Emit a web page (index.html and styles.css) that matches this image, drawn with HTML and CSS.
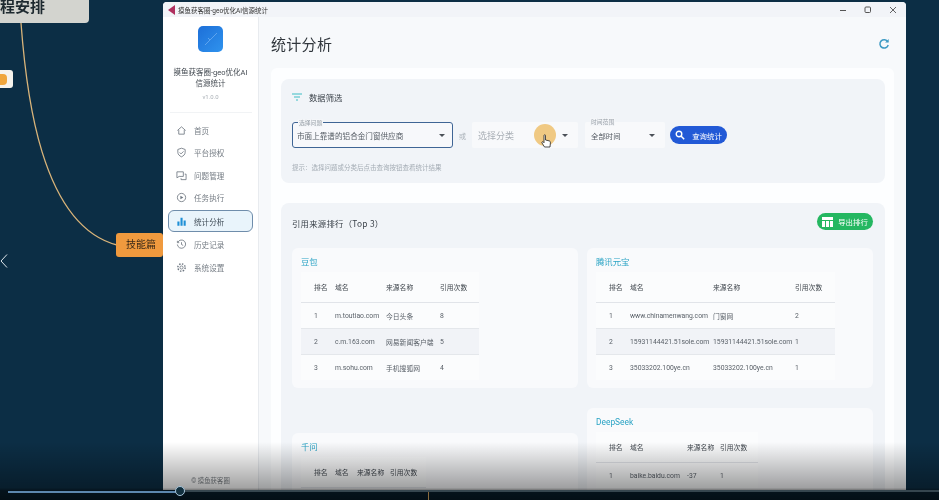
FILE: index.html
```html
<!DOCTYPE html>
<html lang="zh-CN">
<head>
    <meta charset="UTF-8">
    <title>统计分析</title>
    <link rel="stylesheet" href="styles.css">
</head>
<body>
    <!-- 视频背景：思维导图 -->
    <div class="desktop">
        <svg class="map-lines" width="170" height="260" viewBox="0 0 170 260">
            <path d="M21 23C26 90 40 225 117 245" fill="none" stroke="#d9b47a" stroke-width="1.3"/>
        </svg>
        <div class="map-top">程安排</div>
        <div class="map-chip"><span class="map-chip-dot"></span></div>
        <div class="map-node">技能篇</div>
        <svg class="map-back" width="8" height="16" viewBox="0 0 8 16">
            <path d="M7 1.5L1 8l6 6.5" fill="none" stroke="#dfe7ec" stroke-width="1"/>
        </svg>

        <div class="window">
            <div class="titlebar">
                <svg class="app-mark" width="8" height="10" viewBox="0 0 8 10"><path d="M7 0v10L0 5z" fill="#b0305f"/></svg>
                <span class="titlebar-text">摸鱼获客圈-geo优化AI信源统计</span>
                <div class="window-btns">
                    <svg width="8" height="8" viewBox="0 0 8 8"><path d="M1 4.5h6" stroke="#555" stroke-width="1"/></svg>
                    <svg width="8" height="8" viewBox="0 0 8 8"><rect x="1" y="1" width="5.5" height="5.5" rx="1" fill="none" stroke="#555" stroke-width="1"/></svg>
                    <svg width="8" height="8" viewBox="0 0 8 8"><path d="M1 1l6 6M7 1L1 7" stroke="#555" stroke-width=".9"/></svg>
                </div>
            </div>
            <div class="app">
                <aside class="sidebar">
                    <div class="logo">
                        <svg width="16" height="16" viewBox="0 0 16 16"><path d="M2 14L14 2M5 7l2 2 3-3" fill="none" stroke="#5ea4ee" stroke-width="1"/></svg>
                    </div>
                    <div class="app-name">摸鱼获客圈-geo优化AI<br>信源统计</div>
                    <div class="version">v1.0.0</div>
                    <nav class="nav">
                        <a class="nav-item">
                            <svg viewBox="0 0 12 12"><path d="M1.5 6L6 2l4.500 4M3 5.500V10h6V5.500" fill="none" stroke="#6d7680" stroke-width=".9"/></svg>首页
                        </a>
                        <a class="nav-item">
                            <svg viewBox="0 0 12 12"><path d="M6 1.300l4 1.400v3c0 2.500-1.700 3.900-4 5-2.300-1.100-4-2.500-4-5v-3zM4 6l1.500 1.500L8.200 4.800" fill="none" stroke="#6d7680" stroke-width=".9"/></svg>平台授权
                        </a>
                        <a class="nav-item">
                            <svg viewBox="0 0 12 12"><path d="M1 2h7v5H3.500L1 8.500zM9.500 4.500H11v6H5.500V9" fill="none" stroke="#6d7680" stroke-width=".9"/></svg>问题管理
                        </a>
                        <a class="nav-item">
                            <svg viewBox="0 0 12 12"><circle cx="6" cy="6" r="4.500" fill="none" stroke="#6d7680" stroke-width=".9"/><path d="M4.800 4v4L8 6z" fill="#6d7680"/></svg>任务执行
                        </a>
                        <a class="nav-item nav-active">
                            <svg viewBox="0 0 12 12"><path d="M1.500 6h2.300v4.500H1.500zM4.900 2h2.300v8.500H4.900zM8.300 5h2.300v5.500H8.300z" fill="#1f8fd6"/></svg>统计分析
                        </a>
                        <a class="nav-item">
                            <svg viewBox="0 0 12 12"><path d="M2 3.500A4.500 4.500 0 1 1 1.500 6M1.500 2v2h2M6 3.500V6l1.800 1" fill="none" stroke="#6d7680" stroke-width=".9"/></svg>历史记录
                        </a>
                        <a class="nav-item">
                            <svg viewBox="0 0 12 12"><circle cx="6" cy="6" r="1.700" fill="none" stroke="#6d7680" stroke-width=".9"/><circle cx="6" cy="6" r="4" fill="none" stroke="#6d7680" stroke-width="1.600" stroke-dasharray="1.600 1.540"/></svg>系统设置
                        </a>
                    </nav>
                    <div class="copyright">© 摸鱼获客圈</div>
                </aside>

                <main class="main">
                    <div class="page-head">
                        <h1>统计分析</h1>
                        <svg width="12" height="12" viewBox="0 0 12 12"><path d="M9.800 3.800A4.200 4.200 0 1 0 10.200 7" fill="none" stroke="#3f9bc4" stroke-width="1.500"/><path d="M10.700 1v3.600H7.100z" fill="#3f9bc4"/></svg>
                    </div>
                    <div class="panel">
                        <section class="card filter-card">
                            <div class="card-title">
                                <svg width="10" height="8" viewBox="0 0 10 8"><path d="M0 1h10M2 4h6M4 7h2" stroke="#3dbdc4" stroke-width="1"/></svg>
                                <span>数据筛选</span>
                            </div>
                            <div class="filters">
                                <div class="field field-question">
                                    <label>选择问题</label>
                                    <span>市面上靠谱的铝合金门窗供应商</span>
                                    <i class="caret"></i>
                                </div>
                                <span class="or">或</span>
                                <div class="field field-category">
                                    <span>选择分类</span>
                                    <i class="caret"></i>
                                    <span class="click-dot"></span>
                                    <svg class="hand" width="10" height="15" viewBox="0 0 10 15">
                                        <path d="M3 1.500c0-1 1.500-1 1.500 0V6l3.500.8c1 .3 1.500.8 1.400 2L9 13H3.500L1 9c-.6-1 .7-1.800 1.400-1L3 8.700z" fill="#fff" stroke="#222" stroke-width=".8"/>
                                    </svg>
                                </div>
                                <div class="field field-time">
                                    <label>时间范围</label>
                                    <span>全部时间</span>
                                    <i class="caret"></i>
                                </div>
                                <button class="btn btn-query">
                                    <svg width="10" height="10" viewBox="0 0 10 10"><circle cx="4" cy="4" r="2.800" fill="none" stroke="#fff" stroke-width="1.400"/><path d="M6 6l3.200 3.200" stroke="#fff" stroke-width="1.500"/></svg>
                                    查询统计
                                </button>
                            </div>
                            <p class="hint">提示：选择问题或分类后点击查询按钮查看统计结果</p>
                        </section>

                        <section class="card rank-card">
                            <div class="rank-head">
                                <div class="card-title"><span>引用来源排行（Top 3）</span></div>
                                <button class="btn btn-export">
                                    <svg width="11" height="10" viewBox="0 0 11 10"><path d="M0 0h11v3H0zM0 4h3v6H0zM4 4h3v6H4zM8 4h3v6H8z" fill="#fff"/></svg>
                                    导出排行
                                </button>
                            </div>
                            <div class="rank-cols">
                                <div class="rank-col">
                                    <div class="engine">
                                        <h3>豆包</h3>
                                        <table class="t-doubao">
                                            <tr><th>排名</th><th>域名</th><th>来源名称</th><th>引用次数</th></tr>
                                            <tr><td>1</td><td>m.toutiao.com</td><td>今日头条</td><td>8</td></tr>
                                            <tr class="stripe"><td>2</td><td>c.m.163.com</td><td>网易新闻客户端</td><td>5</td></tr>
                                            <tr><td>3</td><td>m.sohu.com</td><td>手机搜狐网</td><td>4</td></tr>
                                        </table>
                                    </div>
                                    <div class="engine engine-qianwen">
                                        <h3>千问</h3>
                                        <table class="t-qianwen">
                                            <tr><th>排名</th><th>域名</th><th>来源名称</th><th>引用次数</th></tr>
                                        </table>
                                    </div>
                                </div>
                                <div class="rank-col">
                                    <div class="engine">
                                        <h3>腾讯元宝</h3>
                                        <table class="t-yuanbao">
                                            <tr><th>排名</th><th>域名</th><th>来源名称</th><th>引用次数</th></tr>
                                            <tr><td>1</td><td>www.chinamenwang.com</td><td>门窗网</td><td>2</td></tr>
                                            <tr class="stripe"><td>2</td><td>15931144421.51sole.com</td><td>15931144421.51sole.com</td><td>1</td></tr>
                                            <tr><td>3</td><td>35033202.100ye.cn</td><td>35033202.100ye.cn</td><td>1</td></tr>
                                        </table>
                                    </div>
                                    <div class="engine engine-deepseek">
                                        <h3>DeepSeek</h3>
                                        <table class="t-deepseek">
                                            <tr><th>排名</th><th>域名</th><th>来源名称</th><th>引用次数</th></tr>
                                            <tr><td>1</td><td>baike.baidu.com</td><td>-37</td><td>1</td></tr>
                                        </table>
                                    </div>
                                </div>
                            </div>
                        </section>
                    </div>
                </main>
            </div>
        </div>

        <!-- 视频播放器底部 -->
        <div class="player-shade"></div>
        <div class="player-tick"></div>
        <div class="player-track"></div>
        <div class="player-bar"></div>
        <div class="player-knob"></div>
    </div>
</body>
</html>
```

FILE: styles.css
```css
html, body {
    margin: 0;
    padding: 0;
    height: 100%;
    overflow: hidden;
}
body {
    font-family: Roboto, "Noto Sans CJK SC", sans-serif;
    background-color: #0c2e45;
}
.desktop {
    position: relative;
    width: 939px;
    height: 500px;
    overflow: hidden;
    background-color: #0c2e45;
    filter: blur(0.35px);
}

/* 思维导图 */
.map-lines {
    position: absolute;
    left: 0;
    top: 0;
}
.map-top {
    position: absolute;
    left: 0;
    top: 0;
    width: 89px;
    height: 23px;
    background: #d3d4cf;
    border-radius: 0 0 4px 0;
    color: #1e2a30;
    font-size: 15px;
    font-weight: bold;
    line-height: 14px;
    overflow: hidden;
}
.map-chip {
    position: absolute;
    left: -4px;
    top: 70px;
    width: 17px;
    height: 18px;
    background: #f6f3ec;
    border-radius: 3px;
}
.map-chip-dot {
    position: absolute;
    left: 0;
    top: 4px;
    width: 11px;
    height: 11px;
    background: #f0a63c;
    border-radius: 4px;
}
.map-node {
    position: absolute;
    left: 116px;
    top: 233px;
    width: 47px;
    height: 24px;
    box-sizing: border-box;
    padding-left: 3px;
    background: #f09a3e;
    border-radius: 3px;
    color: #3a2a18;
    font-size: 10px;
    line-height: 24px;
    text-align: center;
}
.map-back {
    position: absolute;
    left: 0;
    top: 253px;
}

/* 窗口 */
.window {
    position: absolute;
    left: 163px;
    top: 2px;
    width: 743px;
    height: 488px;
    border-radius: 4px 4px 0 0;
    overflow: hidden;
    background: #f7f9fb;
    display: flex;
    flex-direction: column;
}
.titlebar {
    height: 15px;
    flex: none;
    display: flex;
    align-items: center;
    padding: 0 9px 0 5px;
    background: #f2f4f8;
}
.app-mark {
    margin-right: 2px;
}
.titlebar-text {
    font-size: 6.5px;
    color: #333;
}
.window-btns {
    margin-left: auto;
    display: flex;
    gap: 17px;
}
.app {
    flex: 1;
    display: flex;
    min-height: 0;
}

/* 侧边栏 */
.sidebar {
    width: 96px;
    flex: none;
    box-sizing: border-box;
    background: #fff;
    border-right: 1px solid #e8ebef;
    display: flex;
    flex-direction: column;
    align-items: center;
    padding-top: 9px;
}
.logo {
    width: 25px;
    height: 26px;
    border-radius: 5px;
    background: linear-gradient(135deg, #1d6fd8, #2f93ee);
    display: flex;
    align-items: center;
    justify-content: center;
}
.app-name {
    margin-top: 15px;
    font-size: 7.5px;
    line-height: 11px;
    text-align: center;
    color: #444b52;
}
.version {
    margin-top: 3px;
    font-size: 6px;
    line-height: 10px;
    color: #aab0b6;
    padding-bottom: 10px;
    border-bottom: 1px solid #f1f3f5;
    width: 82px;
    text-align: center;
}
.nav {
    margin-top: 6px;
    width: 85px;
    display: flex;
    flex-direction: column;
    gap: 0.6px;
}
.nav-item {
    height: 22px;
    box-sizing: border-box;
    display: flex;
    align-items: center;
    gap: 7px;
    padding-left: 8px;
    border-radius: 6px;
    font-size: 7.6px;
    color: #767d85;
}
.nav-item svg {
    width: 11px;
    height: 11px;
}
.nav-active {
    margin: 1px 0;
    background: #e9f4fb;
    border: 1px solid #6f8dab;
    padding-left: 7px;
    color: #3e4a55;
}
.copyright {
    margin-top: auto;
    margin-bottom: 5px;
    font-size: 6.4px;
    color: #7d8287;
}

/* 主区域 */
.main {
    flex: 1;
    min-width: 0;
    padding: 0 12px;
    display: flex;
    flex-direction: column;
}
.page-head {
    height: 51px;
    flex: none;
    display: flex;
    align-items: center;
    justify-content: space-between;
    padding-right: 4px;
    padding-top: 2px;
    box-sizing: border-box;
}
.page-head h1 {
    margin: 0;
    font-size: 15px;
    font-weight: normal;
    color: #30363c;
    letter-spacing: 0.3px;
}
.panel {
    flex: 1;
    background: #fdfeff;
    border-radius: 6px 6px 0 0;
    padding: 11px 9px 0 10px;
    min-height: 0;
}
.card {
    background: #f1f4f8;
    border-radius: 8px;
    padding: 0 11px;
}
.card-title {
    display: flex;
    align-items: center;
    gap: 7px;
    font-size: 8.4px;
    font-family: "Noto Sans CJK SC", sans-serif;
    color: #3b424a;
}
.filter-card {
    height: 104px;
    box-sizing: border-box;
    padding-top: 12px;
    margin-bottom: 20px;
}
.filter-card .card-title {
    height: 12px;
}
.filters {
    margin-top: 19px;
    display: flex;
    align-items: center;
}
.field {
    position: relative;
    height: 26px;
    box-sizing: border-box;
    background: #f8f9fb;
    display: flex;
    align-items: center;
    padding-left: 6px;
    font-size: 7.4px;
    color: #545b63;
    border-radius: 2px;
}
.field label {
    position: absolute;
    left: 5px;
    top: -4px;
    padding: 0 1px;
    font-size: 5.8px;
    line-height: 8px;
    color: #9aa1a9;
    background: #f4f6f9;
}
.caret {
    position: absolute;
    top: 12px;
    width: 0;
    height: 0;
    border-left: 3px solid transparent;
    border-right: 3px solid transparent;
    border-top: 3px solid #4b5158;
}
.field-question {
    width: 161px;
    padding-left: 4px;
    font-size: 7.6px;
    border: 1.3px solid #3f6595;
    border-radius: 3px;
    background: #f7f8fb;
}
.field-question .caret {
    right: 7px;
    top: 11px;
}
.or {
    width: 19px;
    text-align: center;
    font-size: 7.4px;
    color: #aab1b8;
}
.field-category {
    width: 106px;
    font-size: 9px;
    color: #a9afb6;
}
.field-category .caret {
    right: 10px;
}
.click-dot {
    position: absolute;
    left: 62px;
    top: 2px;
    width: 22px;
    height: 22px;
    border-radius: 50%;
    background: #f0c983;
}
.hand {
    position: absolute;
    left: 69px;
    top: 12px;
}
.field-time {
    width: 80px;
    margin-left: 7px;
}
.field-time .caret {
    right: 10px;
}
.btn {
    border: 0;
    padding: 0;
    border-radius: 10px;
    color: #fff;
    font-family: inherit;
    display: flex;
    align-items: center;
    justify-content: center;
    gap: 7px;
    font-size: 7.4px;
}
.btn-query {
    width: 57px;
    height: 18px;
    margin-left: 5px;
    background: #2259d6;
}
.hint {
    margin: 16px 0 0;
    font-size: 6.5px;
    line-height: 8px;
    color: #a5adb5;
}
.rank-card {
    height: 300px;
    padding-top: 10px;
}
.rank-head {
    height: 17px;
    display: flex;
    align-items: center;
    justify-content: space-between;
}
.rank-head .card-title {
    margin-top: 2px;
    letter-spacing: 0.25px;
}
.btn-export {
    width: 56px;
    height: 17px;
    margin-right: 1px;
    background: #25b761;
    gap: 5px;
}
.rank-cols {
    margin-top: 18px;
    display: flex;
    gap: 9px;
}
.rank-col {
    width: 286px;
    flex: none;
}
.engine {
    background: #f9fafc;
    border-radius: 6px;
    height: 140px;
    box-sizing: border-box;
    padding: 9px 9px 0;
}
.engine-qianwen {
    margin-top: 45px;
}
.engine-deepseek {
    margin-top: 20px;
}
.engine h3 {
    margin: 0;
    height: 15px;
    font-size: 8.4px;
    line-height: 10px;
    font-weight: normal;
    color: #2aa3c4;
}
table {
    border-collapse: collapse;
    table-layout: fixed;
    background: #fbfcfd;
    font-size: 6.8px;
    color: #5a6169;
}
th {
    height: 30px;
    padding: 0;
    font-weight: normal;
    text-align: left;
    color: #40474e;
    border-bottom: 1px solid #e1e4e9;
}
td {
    height: 25px;
    padding: 0;
    white-space: nowrap;
    border-bottom: 1px solid #e4e7eb;
}
tr:last-child td {
    border-bottom: 0;
}
th:first-child, td:first-child {
    padding-left: 13px;
}
.stripe td {
    background: #f1f3f7;
}
.t-doubao { width: 178px; }
.t-doubao th:nth-child(1) { width: 21px; }
.t-doubao th:nth-child(2) { width: 51px; }
.t-doubao th:nth-child(3) { width: 54px; }
.t-yuanbao { width: 239px; }
.t-yuanbao th:nth-child(1) { width: 21px; }
.t-yuanbao th:nth-child(2) { width: 83px; }
.t-yuanbao th:nth-child(3) { width: 82px; }
.t-qianwen { width: 125px; }
.t-qianwen th:nth-child(1) { width: 21px; }
.t-qianwen th:nth-child(2) { width: 22px; }
.t-qianwen th:nth-child(3) { width: 33px; }
.t-deepseek { width: 162px; }
.t-deepseek th:nth-child(1) { width: 21px; }
.t-deepseek th:nth-child(2) { width: 57px; }
.t-deepseek th:nth-child(3) { width: 33px; }

/* 播放器 */
.player-shade {
    position: absolute;
    left: 0;
    right: 0;
    bottom: 0;
    height: 58px;
    background: linear-gradient(to bottom, rgba(0, 0, 0, 0), rgba(0, 0, 0, 0.36) 79%, rgba(0, 0, 0, 0.6) 84%, rgba(0, 0, 0, 0.68));
}
.player-tick {
    position: absolute;
    left: 428px;
    top: 490px;
    width: 1px;
    height: 10px;
    background: #8a6a3c;
}
.player-track {
    position: absolute;
    left: 180px;
    right: 0;
    top: 490px;
    height: 2px;
    background: #36464f;
}
.player-bar {
    position: absolute;
    left: 8px;
    top: 491px;
    width: 172px;
    height: 2px;
    background: #5d87ae;
}
.player-knob {
    position: absolute;
    left: 175px;
    top: 486px;
    width: 8px;
    height: 8px;
    border: 1px solid #a9c6dc;
    border-radius: 50%;
    background: #12303f;
}
```
